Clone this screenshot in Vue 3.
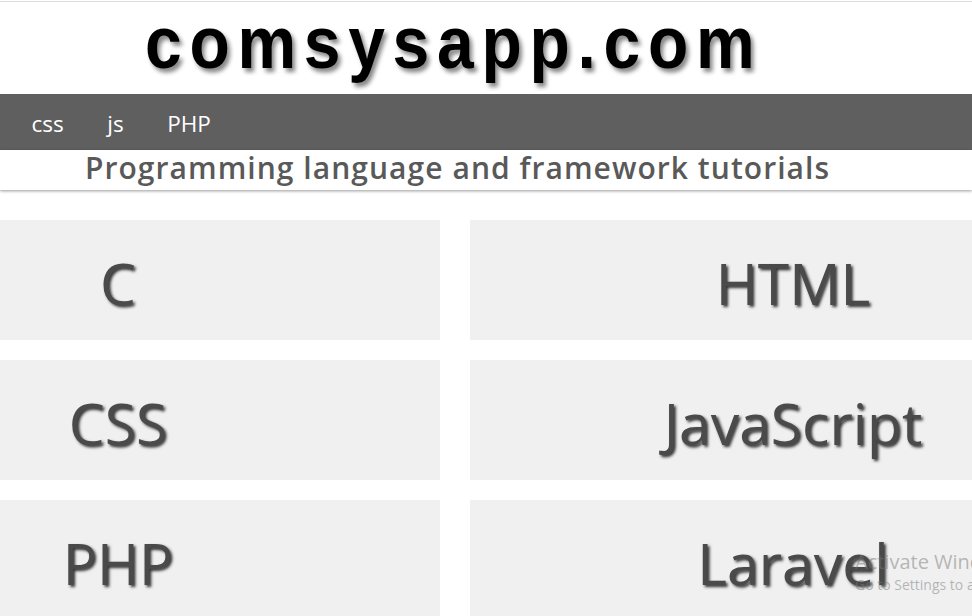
<script setup>
const cards = [
  { id: 1, label: 'C' },
  { id: 2, label: 'HTML' },
  { id: 3, label: 'CSS' },
  { id: 4, label: 'JavaScript' },
  { id: 5, label: 'PHP' },
  { id: 6, label: 'Laravel' }
]
const links = ['css', 'js', 'PHP']
</script>

<template>
  <div class="page">
    <header class="logo-bar">
      <h1 class="logo">comsysapp.com</h1>
    </header>
    <nav class="nav">
      <a v-for="l in links" :key="l" class="nav-link">{{ l }}</a>
    </nav>
    <div class="tagline-bar">
      <h2 class="tagline">Programming language and framework tutorials</h2>
    </div>
    <main class="grid">
      <div v-for="c in cards" :key="c.id" class="card">
        <span class="card-label">{{ c.label }}</span>
      </div>
    </main>
    <div class="watermark">
      <div class="wm-title">Activate Windows</div>
      <div class="wm-sub">Go to Settings to activate Windows.</div>
    </div>
  </div>
</template>

<style>
html, body { margin: 0; overflow: hidden; background: #fff; }
</style>

<style scoped>
.page {
  position: relative;
  width: 972px;
  height: 616px;
  overflow: hidden;
  font-family: "Open Sans", sans-serif;
  background: #fff;
}
.logo-bar {
  height: 92px;
  margin-top: 1px;
  border-top: 1px solid #ddd;
  padding-left: 145px;
}
.logo {
  margin: 0;
  padding-top: 3px;
  font-family: "Liberation Sans", sans-serif;
  font-size: 66px;
  line-height: 78px;
  font-weight: 700;
  letter-spacing: 7.7px;
  color: #000;
  text-shadow: 3px 3px 4px #888;
  white-space: nowrap;
  transform: scaleY(1.13);
  transform-origin: 0 56px;
}
.nav {
  height: 56px;
  background: #5f5f5f;
  display: flex;
  align-items: center;
  padding-left: 31.5px;
  gap: 43.5px;
}
.nav-link {
  color: #fff;
  font-size: 22.5px;
  position: relative;
  top: 1px;
}
.tagline-bar {
  height: 40px;
  box-shadow: 0 1px 3px rgba(0,0,0,.4);
  padding-left: 85px;
}
.tagline {
  margin: 0;
  font-size: 30px;
  line-height: 36px;
  font-weight: 600;
  letter-spacing: 1.05px;
  color: #595959;
  white-space: nowrap;
}
.grid {
  display: grid;
  grid-template-columns: 440px 502px;
  column-gap: 30px;
  row-gap: 20px;
  margin-top: 30px;
}
.card {
  height: 120px;
  background: #f0f0f0;
  display: flex;
  align-items: center;
  justify-content: center;
  padding-top: 6px;
  box-sizing: border-box;
}
.card:nth-child(odd) { padding-right: 204px; }
.card:nth-child(even) { padding-left: 144px; }
.card-label {
  font-size: 57px;
  color: #4a4a4a;
  text-shadow: 2px 2px 3px #333;
  white-space: nowrap;
}
.watermark {
  position: absolute;
  left: 855px;
  top: 549px;
  color: rgba(120,120,120,.5);
  white-space: nowrap;
}
.wm-title { font-size: 20px; line-height: 26px; }
.wm-sub { font-size: 14px; line-height: 20px; }
</style>
